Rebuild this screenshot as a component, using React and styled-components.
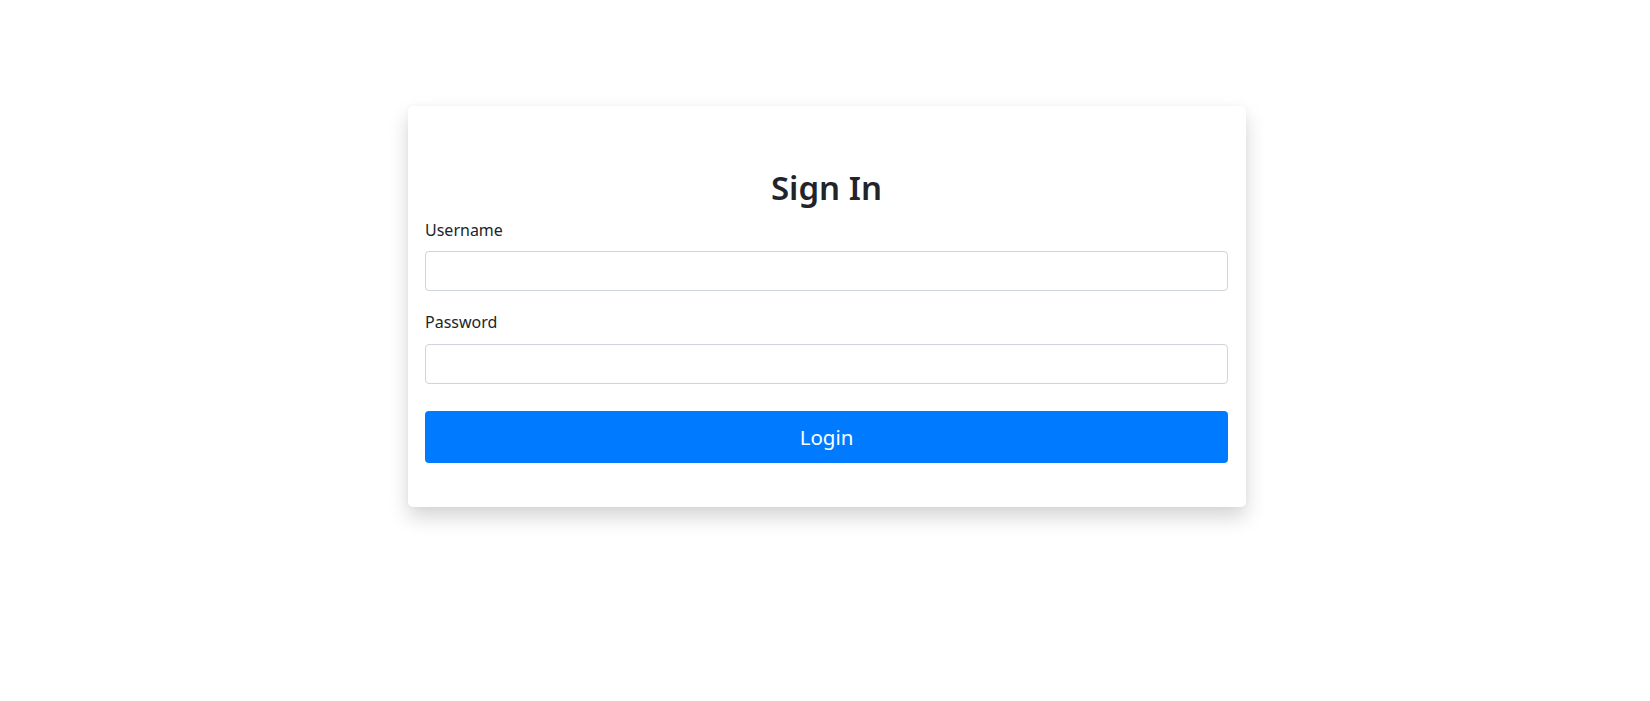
import React from 'react';
import styled, { createGlobalStyle } from 'styled-components';

const GlobalStyle = createGlobalStyle`
  body {
    margin: 0;
    background: #fff;
    font-family: 'Noto Sans', 'Open Sans', sans-serif;
    color: #212529;
  }
`;

const Page = styled.div`
  min-height: 701px;
  box-sizing: border-box;
  padding: 106px 0 0 4px;
`;

const Card = styled.form`
  width: 838px;
  margin: 0 auto;
  box-sizing: border-box;
  padding: 17px 18px 44px 17px;
  background: #fff;
  border-radius: 5px;
  box-shadow: 0 10px 20px rgba(0, 0, 0, 0.17), 0 0 6px rgba(0, 0, 0, 0.03);
`;

const Title = styled.h2`
  margin: 45px 0 8px;
  font-size: 33px;
  line-height: 40.8px;
  font-weight: 600;
  text-align: center;
  color: #212529;
`;

const Group = styled.div`
  margin-bottom: ${(p) => p.gap}px;
`;

const Label = styled.label`
  display: block;
  margin-bottom: 8px;
  font-size: 16px;
  line-height: 26.4px;
  color: #212529;
`;

const Input = styled.input`
  display: block;
  width: 100%;
  height: 40px;
  box-sizing: border-box;
  padding: 6px 13px;
  border: 1px solid #ced4da;
  border-radius: 4px;
  font: inherit;
  font-size: 17px;
  outline: none;
`;

const Button = styled.button`
  display: block;
  width: 100%;
  height: 52px;
  border: 0;
  border-radius: 4px;
  background: #007bff;
  color: #fff;
  font-family: inherit;
  font-size: 20.5px;
  cursor: pointer;
`;

export default function App() {
  return (
    <Page>
      <GlobalStyle />
      <Card onSubmit={(e) => e.preventDefault()}>
        <Title>Sign In</Title>
        <Group gap={18}>
          <Label htmlFor="username">Username</Label>
          <Input id="username" type="text" />
        </Group>
        <Group gap={27}>
          <Label htmlFor="password">Password</Label>
          <Input id="password" type="password" />
        </Group>
        <Button type="submit">Login</Button>
      </Card>
    </Page>
  );
}
